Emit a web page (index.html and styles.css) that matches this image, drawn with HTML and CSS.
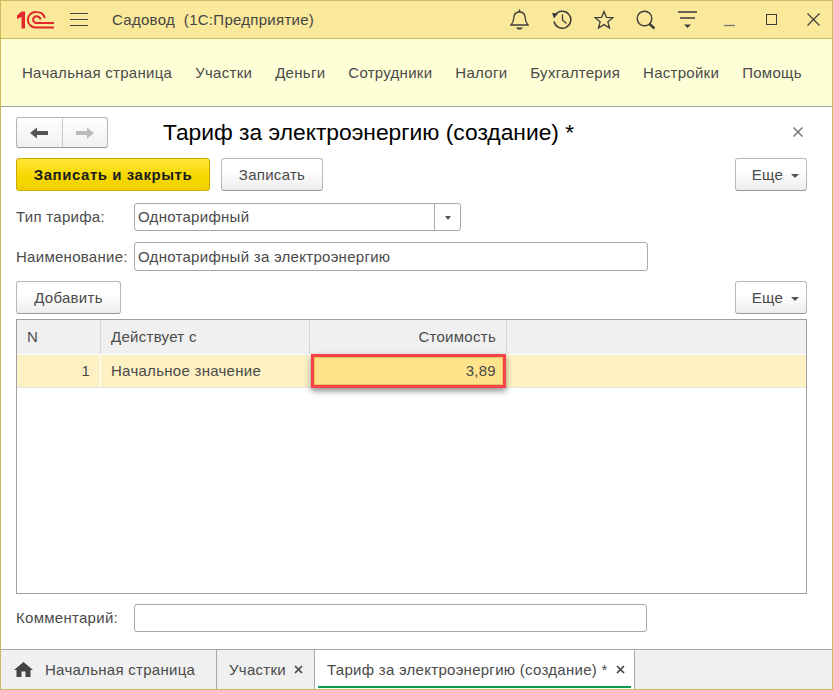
FILE: index.html
```html
<!DOCTYPE html>
<html>
	<head>
		<meta charset="utf-8">
		<title>Садовод</title>
		<link rel="stylesheet" href="styles.css">
	</head>
	<body>
		<div class="window">
			<div class="titlebar">
				<svg class="logo" width="37" height="18" viewBox="0 0 37 18">
					<path d="M0 4.500 L4.500 0.500 H8 V17.500 H4.500 V6 L0 8 Z" fill="#e3262b"/>
					<path d="M37 16.500 H19.500 A7.800 7.800 0 1 1 19.500 1 C24 1 26.800 3.500 27.800 7" fill="none" stroke="#e3262b" stroke-width="2"/>
					<path d="M37 12 H19.500 A3.400 3.400 0 1 1 19.500 5.200 C21.500 5.200 23 6.500 23.800 8.500" fill="none" stroke="#e3262b" stroke-width="2"/>
				</svg>
				<svg class="burger" width="18" height="15" viewBox="0 0 18 15">
					<path d="M0 1.500 H18 M0 7.500 H18 M0 13.500 H18" stroke="#444" stroke-width="1.200"/>
				</svg>
				<div class="app-name">Садовод&nbsp; (1С:Предприятие)</div>
				<div class="tools">
					<svg class="tool bell" width="19" height="21" viewBox="0 0 19 21">
						<path d="M1 16 H18 C15 13 15.500 10 15 7.500 C14.500 4.500 12 3 9.500 3 C7 3 4.500 4.500 4 7.500 C3.500 10 4 13 1 16 Z" fill="none" stroke="#3c3c3c" stroke-width="1.300"/>
						<path d="M9.500 0.500 V3" stroke="#3c3c3c" stroke-width="1.500"/>
						<path d="M6 18.500 H13 L11 20.500 H8 Z" fill="#3c3c3c"/>
					</svg>
					<svg class="tool history" width="21" height="20" viewBox="0 0 21 20">
						<path d="M4.300 5 A8.500 8.500 0 1 1 3 11.500" fill="none" stroke="#3c3c3c" stroke-width="1.500"/>
						<path d="M1 3 L7 3.500 L3 8.500 Z" fill="#3c3c3c"/>
						<path d="M11.500 4.500 V10 L15.500 13.500" fill="none" stroke="#3c3c3c" stroke-width="1.300"/>
					</svg>
					<svg class="tool star" width="20" height="19" viewBox="0 0 20 19">
						<path d="M10 1.500 L12.400 7.300 L18.800 7.700 L13.900 11.800 L15.500 18 L10 14.600 L4.500 18 L6.100 11.800 L1.200 7.700 L7.600 7.300 Z" fill="none" stroke="#3c3c3c" stroke-width="1.300"/>
					</svg>
					<svg class="tool search" width="20" height="20" viewBox="0 0 20 20">
						<circle cx="8.500" cy="8.500" r="7.300" fill="none" stroke="#3c3c3c" stroke-width="1.400"/>
						<path d="M13.500 14 L18.500 18.500" stroke="#3c3c3c" stroke-width="2.400"/>
					</svg>
					<svg class="tool filter" width="19" height="18" viewBox="0 0 19 18">
						<path d="M0 1 H19 M2 7 H17" stroke="#3c3c3c" stroke-width="1.300"/>
						<path d="M6 13.500 H13 L9.500 17 Z" fill="#3c3c3c"/>
					</svg>
					<svg class="tool minimize" width="11" height="14" viewBox="0 0 11 14">
						<path d="M0 12.500 H11" stroke="#777" stroke-width="1.400"/>
					</svg>
					<div class="maximize"></div>
					<svg class="tool close" width="13" height="13" viewBox="0 0 13 13">
						<path d="M0.500 0.500 L12.500 12.500 M12.500 0.500 L0.500 12.500" stroke="#3c3c3c" stroke-width="1.200"/>
					</svg>
				</div>
			</div>

			<div class="menu">
				<span>Начальная страница</span>
				<span>Участки</span>
				<span>Деньги</span>
				<span>Сотрудники</span>
				<span>Налоги</span>
				<span>Бухгалтерия</span>
				<span>Настройки</span>
				<span>Помощь</span>
			</div>

			<div class="form">
				<div class="form-head">
					<div class="nav-btns">
						<div class="nav-btn">
							<svg width="18" height="12" viewBox="0 0 18 12"><path d="M0 6 L7 0.500 V4 H18 V8 H7 V11.500 Z" fill="#555"/></svg>
						</div>
						<div class="nav-btn">
							<svg width="18" height="12" viewBox="0 0 18 12"><path d="M18 6 L11 0.500 V4 H0 V8 H11 V11.500 Z" fill="#bbb"/></svg>
						</div>
					</div>
					<h1 class="form-title">Тариф за электроэнергию (создание) *</h1>
					<svg class="form-close" width="10" height="10" viewBox="0 0 10 10">
						<path d="M0.500 0.500 L9.500 9.500 M9.500 0.500 L0.500 9.500" stroke="#777" stroke-width="1.500"/>
					</svg>
				</div>

				<div class="row cmd-row">
					<div class="btn btn-main">Записать и закрыть</div>
					<div class="btn btn-save">Записать</div>
					<div class="btn btn-more">Еще<i class="caret"></i></div>
				</div>

				<div class="row field-row type-row">
					<label class="label">Тип тарифа:</label>
					<div class="field field-type">
						<span class="field-text">Однотарифный</span>
						<span class="field-drop"><i class="caret"></i></span>
					</div>
				</div>

				<div class="row field-row name-row">
					<label class="label">Наименование:</label>
					<div class="field field-name"><span class="field-text">Однотарифный за электроэнергию</span></div>
				</div>

				<div class="row add-row">
					<div class="btn btn-add">Добавить</div>
					<div class="btn btn-more">Еще<i class="caret"></i></div>
				</div>

				<div class="grid">
					<div class="grid-head">
						<div class="cell col-n">N</div>
						<div class="cell col-date">Действует с</div>
						<div class="cell col-cost">Стоимость</div>
						<div class="cell col-rest"></div>
					</div>
					<div class="grid-row">
						<div class="cell col-n num">1</div>
						<div class="cell col-date">Начальное значение</div>
						<div class="cell col-cost num selected">3,89</div>
						<div class="cell col-rest"></div>
					</div>
				</div>

				<div class="row field-row comment-row">
					<label class="label">Комментарий:</label>
					<div class="field field-comment"></div>
				</div>
			</div>

			<div class="tabs">
				<div class="tab tab-home">
					<svg width="19" height="15" viewBox="0 0 19 15"><path d="M9.500 0 L19 8 H16.500 V15 H11.500 V9.500 H7.500 V15 H2.500 V8 H0 Z" fill="#444"/></svg>
					<span>Начальная страница</span>
				</div>
				<div class="tab tab-plain">
					<span>Участки</span>
					<svg class="tab-x" width="9" height="9" viewBox="0 0 9 9"><path d="M1 1 L8 8 M8 1 L1 8" stroke="#444" stroke-width="1.700"/></svg>
				</div>
				<div class="tab tab-active">
					<span>Тариф за электроэнергию (создание) *</span>
					<svg class="tab-x" width="9" height="9" viewBox="0 0 9 9"><path d="M1 1 L8 8 M8 1 L1 8" stroke="#444" stroke-width="1.700"/></svg>
				</div>
			</div>
		</div>
	</body>
</html>
```

FILE: styles.css
```css
* {
	margin: 0;
	padding: 0;
	box-sizing: border-box;
}

body {
	width: 833px;
	height: 690px;
	overflow: hidden;
	font-family: "Liberation Sans", Arial, sans-serif;
	font-size: 15px;
	letter-spacing: 0.28px;
	color: #4a4a4a;
}

.window {
	width: 833px;
	height: 690px;
	display: flex;
	flex-direction: column;
	border: 1px solid #cdb960;
	background: #fff;
}

/* title bar */
.titlebar {
	height: 38px;
	flex: none;
	display: flex;
	align-items: center;
	background: #fbe99b;
	border-bottom: 1px solid #cdb960;
}

.logo {
	margin-left: 16px;
}

.burger {
	margin-left: 16px;
}

.app-name {
	margin-left: 24px;
	color: #444;
}

.tools {
	margin-left: auto;
	display: flex;
	align-items: center;
}

.tool {
	flex: none;
}

.history { margin-left: 22px; }
.star { margin-left: 22px; }
.search { margin-left: 22px; }
.filter { margin-left: 22px; }
.minimize { margin-left: 27px; }

.maximize {
	width: 11px;
	height: 11px;
	margin-left: 31px;
	border: 1px solid #3c3c3c;
}

.close {
	margin-left: 30px;
	margin-right: 12px;
}

/* main menu */
.menu {
	height: 68px;
	flex: none;
	display: flex;
	align-items: center;
	gap: 23px;
	padding-left: 21px;
	background: #ffffd7;
	border-bottom: 1px solid #a0a0a0;
	white-space: nowrap;
}

/* form */
.form {
	flex: 1;
	min-height: 0;
	padding: 10px 25px 0 15px;
}

.form-head {
	height: 32px;
	display: flex;
	align-items: flex-start;
}

.nav-btns {
	width: 92px;
	height: 31px;
	display: flex;
	border: 1px solid #b4b4b4;
	border-bottom-color: #999;
	border-radius: 3px;
	background: linear-gradient(#fff, #f0f0f0);
}

.nav-btn {
	flex: 1;
	display: flex;
	align-items: center;
	justify-content: center;
}

.nav-btn + .nav-btn {
	border-left: 1px solid #c8c8c8;
}

.form-title {
	margin-left: 55px;
	margin-top: 2px;
	font-size: 22.800px;
	font-weight: normal;
	letter-spacing: 0;
	color: #000;
	white-space: nowrap;
}

.form-close {
	margin-left: auto;
	margin-right: 4px;
	margin-top: 10px;
}

.row {
	display: flex;
	align-items: center;
}

.cmd-row {
	margin-top: 9px;
}

.btn {
	height: 33px;
	display: flex;
	align-items: center;
	justify-content: center;
	border: 1px solid #b8b8b8;
	border-bottom-color: #999;
	border-radius: 3px;
	background: linear-gradient(#fff 40%, #ececec);
	white-space: nowrap;
}

.btn-main {
	width: 194px;
	font-weight: bold;
	letter-spacing: 0.55px;
	color: #1c1c1c;
	border-color: #c9a800;
	background: linear-gradient(#ffe838, #f6d800 55%, #f0d000);
}

.btn-save {
	width: 102px;
	margin-left: 11px;
}

.btn-more {
	width: 72px;
	margin-left: auto;
	padding-left: 9px;
}

.btn-add {
	width: 105px;
}

.caret {
	display: inline-block;
	width: 0;
	height: 0;
	margin-left: 8px;
	margin-top: 2px;
	border: 4px solid transparent;
	border-top: 4px solid #555;
	border-bottom: 0;
}

/* fields */
.field-row .label {
	width: 118px;
	flex: none;
	padding-bottom: 1px;
	white-space: nowrap;
}

.field {
	display: flex;
	align-items: center;
	border: 1px solid #a9a9a9;
	border-radius: 3px;
	background: #fff;
}

.field-text {
	flex: 1;
	padding-left: 3px;
	padding-bottom: 1px;
}

.type-row {
	margin-top: 12px;
}

.field-type {
	width: 327px;
	height: 28px;
}

.field-drop {
	width: 26px;
	height: 100%;
	display: flex;
	align-items: center;
	justify-content: center;
	border-left: 1px solid #a9a9a9;
}

.field-drop .caret {
	margin: 1px 0 0;
	border-width: 4px 3.500px 0;
}

.name-row {
	margin-top: 11px;
}

.field-name {
	width: 514px;
	height: 29px;
}

.add-row {
	margin-top: 10px;
}

/* table */
.grid {
	height: 275px;
	margin-top: 5px;
	border: 1px solid #a0a0a0;
}

.grid-head,
.grid-row {
	display: flex;
}

.grid-head {
	height: 35px;
	background: #f0f0f0;
	border-bottom: 1px solid #fff;
}

.grid-row {
	height: 33px;
	background: #fdf1c3;
	border-bottom: 1px solid #e4e4e4;
}

.cell {
	display: flex;
	align-items: center;
	padding: 0 10px 2px;
	border-right: 1px solid #e4e4e4;
	white-space: nowrap;
}

.grid-head .cell {
	border-right-color: #d8d8d8;
}

.col-n {
	width: 84px;
}

.col-date {
	width: 209px;
}

.col-cost {
	width: 197px;
	justify-content: flex-end;
}

.col-rest {
	flex: 1;
	border-right: 0;
}

.num {
	justify-content: flex-end;
}

.grid-row .cell {
	border-right-color: #fff;
}

/* выделенная ячейка чуть выступает за строку */
.grid-row .selected {
	width: 195px;
	margin: -1px 1px;
	padding-right: 7px;
	background: #ffe38b;
	border: 3px solid #f8434a;
	box-shadow: inset 0 0 0 1px #e8c55c, 0 3px 6px rgba(0, 0, 0, 0.45);
}

.comment-row {
	margin-top: 10px;
}

.field-comment {
	width: 513px;
	height: 28px;
}

/* open windows */
.tabs {
	height: 40px;
	flex: none;
	display: flex;
	background: #f0f0f0;
	border-top: 1px solid #a8a8a8;
}

.tab {
	height: 100%;
	display: flex;
	align-items: center;
	border-right: 1px solid #a8a8a8;
	white-space: nowrap;
}

.tab-home {
	width: 216px;
	padding-left: 13px;
	gap: 12px;
}

.tab-plain {
	width: 98px;
	padding-left: 12px;
}

.tab-active {
	position: relative;
	width: 320px;
	padding-left: 12px;
	background: #fff;
}

.tab-active::after {
	content: "";
	position: absolute;
	left: 3px;
	right: 3px;
	bottom: 1px;
	height: 2px;
	background: #0b9a50;
}

.tab-x {
	margin-left: 8px;
}
```
